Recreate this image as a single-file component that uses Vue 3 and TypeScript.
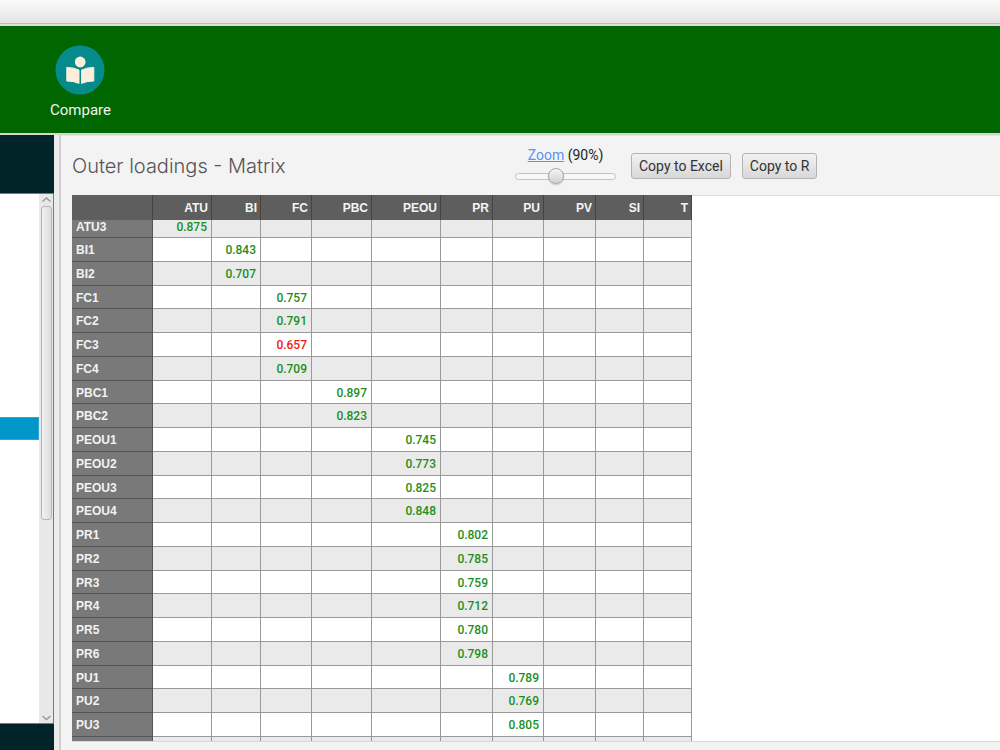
<script setup lang="ts">
import { ref } from 'vue'

interface Row {
  name: string
  column: string
  value: number
}

const columns = ['ATU', 'BI', 'FC', 'PBC', 'PEOU', 'PR', 'PU', 'PV', 'SI', 'T']

const rows: Row[] = [
  { name: 'ATU3', column: 'ATU', value: 0.875 },
  { name: 'BI1', column: 'BI', value: 0.843 },
  { name: 'BI2', column: 'BI', value: 0.707 },
  { name: 'FC1', column: 'FC', value: 0.757 },
  { name: 'FC2', column: 'FC', value: 0.791 },
  { name: 'FC3', column: 'FC', value: 0.657 },
  { name: 'FC4', column: 'FC', value: 0.709 },
  { name: 'PBC1', column: 'PBC', value: 0.897 },
  { name: 'PBC2', column: 'PBC', value: 0.823 },
  { name: 'PEOU1', column: 'PEOU', value: 0.745 },
  { name: 'PEOU2', column: 'PEOU', value: 0.773 },
  { name: 'PEOU3', column: 'PEOU', value: 0.825 },
  { name: 'PEOU4', column: 'PEOU', value: 0.848 },
  { name: 'PR1', column: 'PR', value: 0.802 },
  { name: 'PR2', column: 'PR', value: 0.785 },
  { name: 'PR3', column: 'PR', value: 0.759 },
  { name: 'PR4', column: 'PR', value: 0.712 },
  { name: 'PR5', column: 'PR', value: 0.78 },
  { name: 'PR6', column: 'PR', value: 0.798 },
  { name: 'PU1', column: 'PU', value: 0.789 },
  { name: 'PU2', column: 'PU', value: 0.769 },
  { name: 'PU3', column: 'PU', value: 0.805 },
]

const threshold = 0.7
const zoom = ref(90)
</script>

<template>
  <div class="app">
    <div class="window-bar"></div>

    <header class="toolbar">
      <button class="tool" type="button">
        <svg class="tool-icon" viewBox="0 0 50 50" aria-hidden="true">
          <circle cx="25" cy="25" r="24.5" fill="#058b8b" />
          <circle cx="25.2" cy="17" r="5.4" fill="#fbeedd" />
          <path d="M11.8 22.4Q18.5 22.400 24 25V38.400Q18.500 36 11.800 36Z" fill="#fbeedd" stroke="#fbeedd" stroke-linejoin="round" />
          <path d="M38.800 22.400Q32 22.400 26.600 25V38.400Q32 36 38.800 36Z" fill="#fbeedd" stroke="#fbeedd" stroke-linejoin="round" />
        </svg>
        <span>Compare</span>
      </button>
    </header>

    <div class="body">
      <aside class="sidebar">
        <div class="list">
          <div class="list-items"><div class="selected"></div></div>
          <div class="scrollbar">
            <svg class="arrow" viewBox="0 0 14 12" aria-hidden="true">
              <path d="M3.500 7.500L7.500 4L11.500 7.500" fill="none" stroke="#999" stroke-width="1.500" />
            </svg>
            <div class="thumb"></div>
            <svg class="arrow" viewBox="0 0 14 12" aria-hidden="true">
              <path d="M3.500 5L7.500 8.500L11.500 5" fill="none" stroke="#999" stroke-width="1.500" />
            </svg>
          </div>
        </div>
      </aside>
      <div class="splitter"></div>

      <main class="panel">
        <div class="panel-head">
          <h1>Outer loadings - Matrix</h1>
          <div class="zoom">
            <label for="zoom"><a href="#">Zoom</a> ({{ zoom }}%)</label>
            <input id="zoom" v-model.number="zoom" type="range" min="50" max="155" />
          </div>
          <button class="btn excel" type="button">Copy to Excel</button>
          <button class="btn" type="button">Copy to R</button>
        </div>

        <div class="sheet">
          <table>
            <colgroup>
              <col class="w-name" />
              <col v-for="c in columns" :key="c" :class="'w-' + c.toLowerCase()" />
            </colgroup>
            <thead>
              <tr>
                <td></td>
                <th v-for="c in columns" :key="c" scope="col">{{ c }}</th>
              </tr>
            </thead>
            <tbody>
              <tr v-for="row in rows" :key="row.name">
                <th scope="row">{{ row.name }}</th>
                <td v-for="c in columns" :key="c" :class="{ low: row.value < threshold }">
                  {{ c === row.column ? row.value.toFixed(3) : '' }}
                </td>
              </tr>
              <tr class="partial">
                <th scope="row"></th>
                <td v-for="c in columns" :key="c"></td>
              </tr>
            </tbody>
          </table>
        </div>
      </main>
    </div>
  </div>
</template>

<style>
body {
  margin: 0;
}
</style>

<style scoped>
.app {
  display: flex;
  flex-direction: column;
  min-height: 100vh;
  background: #f3f3f3;
  font-family: "Liberation Sans", Arial, sans-serif;
  color: #333;
}
.window-bar {
  box-sizing: border-box;
  height: 26px;
  background: linear-gradient(#fafafa, #e4e4e4 23px, #bcbcbc 23px, #bcbcbc 24px, #dedede 24px);
}
.toolbar {
  display: flex;
  align-items: flex-start;
  height: 107px;
  padding-left: 44px;
  box-sizing: border-box;
  background: #060;
}
.tool {
  display: flex;
  flex-direction: column;
  align-items: center;
  gap: 6px;
  padding: 19px 6px 0;
  border: 0;
  background: none;
  color: #eef5ee;
  font: 15px/18px Roboto, Arial, sans-serif;
}
.tool-icon {
  width: 50px;
  height: 50px;
}
.body {
  display: flex;
  flex: 1;
  border-top: 2px solid #d4d4d4;
}
.sidebar {
  display: flex;
  box-sizing: border-box;
  width: 54px;
  padding: 58px 0 26px;
  background: #002427;
}
.list {
  display: flex;
  flex: 1;
  border: 1px solid #00a2dc;
  border-left: 0;
  background: #fff;
}
.list-items {
  flex: 1;
  padding-top: 223px;
}
.selected {
  box-sizing: border-box;
  height: 23px;
  border: 1px solid #2aa5d4;
  border-left: 0;
  background: #0096c9;
}
.scrollbar {
  display: flex;
  flex-direction: column;
  width: 14px;
  background: #e8e8e8;
}
.arrow {
  width: 14px;
  height: 12px;
}
.thumb {
  box-sizing: border-box;
  height: 314px;
  margin: 0 1px auto 2px;
  border: 1px solid #b5b5b5;
  border-radius: 3px;
  background: linear-gradient(90deg, #f2f2f2, #dcdcdc);
}
.splitter {
  box-sizing: border-box;
  width: 7px;
  border-right: 2px solid #d0d0d0;
  background: #ececec;
}
.panel {
  display: flex;
  flex: 1;
  flex-direction: column;
  padding: 0 0 8px 11px;
  border-top: 1px solid #e4e4e4;
}
.panel-head {
  display: flex;
  align-items: center;
  box-sizing: border-box;
  height: 59px;
}
h1 {
  width: 443px;
  margin: 0;
  color: #555;
  font: 300 20px/24px Inter, "Open Sans", sans-serif;
}
.zoom {
  display: flex;
  flex-direction: column;
  align-items: center;
  gap: 5px;
  width: 101px;
  margin-right: 15px;
}
.zoom label {
  color: #222;
  font: 14px/16px Roboto, Arial, sans-serif;
}
.zoom a {
  color: #5b93f5;
}
.zoom input {
  width: 100%;
  height: 16px;
  margin: 0;
  appearance: none;
  background: none;
}
.zoom input::-webkit-slider-runnable-track {
  box-sizing: border-box;
  height: 7px;
  border: 1px solid #c2c2c2;
  border-radius: 4px;
  background: #f8f8f8;
}
.zoom input::-webkit-slider-thumb {
  box-sizing: border-box;
  width: 16px;
  height: 16px;
  margin-top: -6px;
  appearance: none;
  border: 1px solid #a8a8a8;
  border-radius: 50%;
  background: linear-gradient(#f4f4f4, #d2d2d2);
  box-shadow: 0 1px 2px #0003;
}
.btn {
  height: 26px;
  padding: 0 7px;
  border: 1px solid #b4b4b4;
  border-radius: 3px;
  background: linear-gradient(#f2f2f2, #d8d8d8);
  color: #333;
  font: 14px/16px Roboto, Arial, sans-serif;
}
.excel {
  margin-right: 11px;
}
.sheet {
  flex: 1;
  border-bottom: 1px solid #d8d8d8;
  background: linear-gradient(#dcdcdc 1px, #fff 1px);
}
table {
  table-layout: fixed;
  width: 620px;
  border-spacing: 0;
  font-size: 12px;
  line-height: 14px;
}
.w-name { width: 81px; }
.w-atu { width: 59px; }
.w-bi { width: 49px; }
.w-fc, .w-pu { width: 51px; }
.w-pbc { width: 60px; }
.w-peou { width: 69px; }
.w-pr, .w-pv { width: 52px; }
.w-si, .w-t { width: 48px; }
th,
td {
  box-sizing: border-box;
  height: 24px;
  padding: 1px 4px 0;
  border-right: 1px solid #999;
  border-bottom: 1px solid #999;
  text-align: right;
}
thead th,
thead td {
  height: 25px;
  padding: 2px 3px 0;
  border-color: #444;
  border-bottom-color: #5e5e5e;
  background: #5e5e5e;
  color: #f4f4f4;
}
tbody th {
  border-color: #555;
  background: #797979;
  color: #f2f2f2;
  text-align: left;
}
tbody td {
  color: #1b8f1b;
  font-family: Roboto, Arial, sans-serif;
  font-weight: 500;
}
tbody td.low {
  color: #f01818;
}
tbody tr:nth-child(odd) td {
  background: #eaeaea;
}
tbody tr:nth-child(4n) > * {
  height: 23px;
}
tbody tr:first-child > * {
  height: 18px;
  padding-top: 0;
  padding-bottom: 3px;
}
tbody tr.partial > * {
  height: 4px;
  border-bottom: 0;
}
</style>
